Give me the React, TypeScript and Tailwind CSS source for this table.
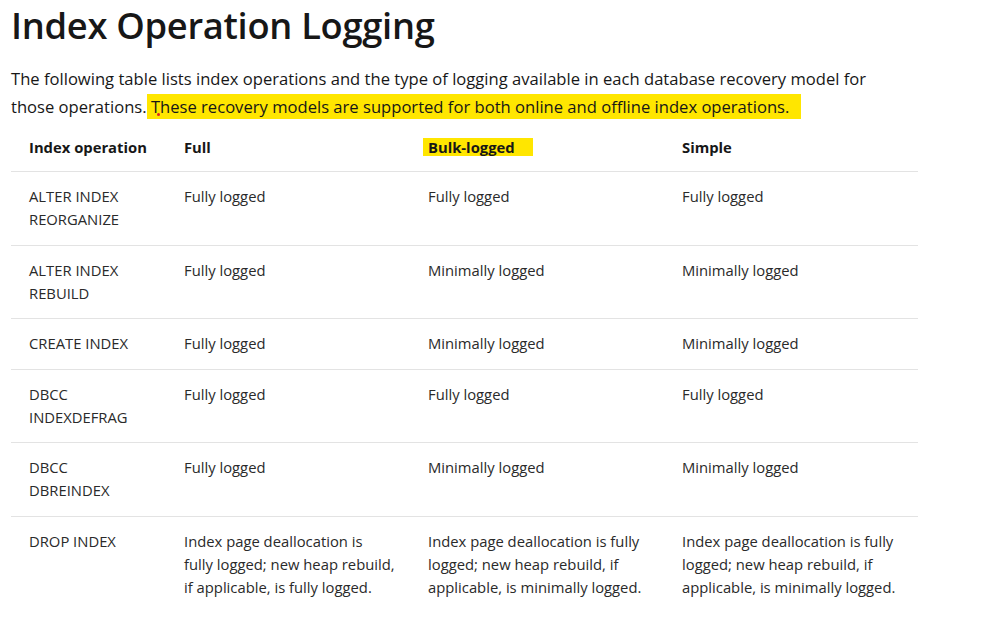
const rows: { op: string[]; full: string[]; bulk: string[]; simple: string[]; pb: string }[] = [
  { op: ["ALTER INDEX", "REORGANIZE"], full: ["Fully logged"], bulk: ["Fully logged"], simple: ["Fully logged"], pb: "pb-[14px]" },
  { op: ["ALTER INDEX", "REBUILD"], full: ["Fully logged"], bulk: ["Minimally logged"], simple: ["Minimally logged"], pb: "pb-[13px]" },
  { op: ["CREATE INDEX"], full: ["Fully logged"], bulk: ["Minimally logged"], simple: ["Minimally logged"], pb: "pb-[14px]" },
  { op: ["DBCC", "INDEXDEFRAG"], full: ["Fully logged"], bulk: ["Fully logged"], simple: ["Fully logged"], pb: "pb-[13px]" },
  { op: ["DBCC", "DBREINDEX"], full: ["Fully logged"], bulk: ["Minimally logged"], simple: ["Minimally logged"], pb: "pb-[14px]" },
  {
    op: ["DROP INDEX"],
    full: ["Index page deallocation is", "fully logged; new heap rebuild,", "if applicable, is fully logged."],
    bulk: ["Index page deallocation is fully", "logged; new heap rebuild, if", "applicable, is minimally logged."],
    simple: ["Index page deallocation is fully", "logged; new heap rebuild, if", "applicable, is minimally logged."],
    pb: "pb-[14px]",
  },
];

function Lines({ lines }: { lines: string[] }) {
  return (
    <>
      {lines.map((l, i) => (
        <span key={i} className="block whitespace-nowrap">
          {l}
        </span>
      ))}
    </>
  );
}

export default function App() {
  return (
    <div
      className="min-h-screen bg-white px-[11px] pt-[1px] text-[#171717]"
      style={{ fontFamily: '"Open Sans", "Noto Sans", sans-serif' }}
    >
      <h1 className="text-[36.3px] font-semibold leading-[48px] tracking-[-0.3px]">Index Operation Logging</h1>

      {/* intro paragraph */}
      <p className="mt-[16px] max-w-[885px] text-[16.6px] leading-[28px]">
        The following table lists index operations and the type of logging available in each database recovery model for
        those operations.{" "}
        <span className="relative bg-[#ffe600] pr-[12px] pt-[1px] pb-[1px] shadow-[-4px_0_0_#ffe600]">
          These recovery models are supported for both online and offline index operations.
          <span className="absolute left-[6px] top-[19px] h-[3px] w-[3px] rounded-full bg-[#e02020]" />
        </span>
      </p>

      <table className="w-[907px] table-fixed border-collapse text-[14.8px] leading-[23px]">
        <colgroup>
          <col className="w-[155px]" />
          <col className="w-[244px]" />
          <col className="w-[254px]" />
          <col className="w-[254px]" />
        </colgroup>
        <thead>
          <tr className="border-b border-[#e3e3e3] text-left font-bold text-[#171717]">
            <th className="px-[18px] pt-[15px] pb-[12px] font-bold">Index operation</th>
            <th className="px-[18px] pt-[15px] pb-[12px] font-bold">Full</th>
            <th className="pl-[13px] pr-[18px] pt-[15px] pb-[12px] font-bold">
              <span className="inline-block bg-[#ffe600] pl-[5px] pr-[18px] leading-[18px]">Bulk-logged</span>
            </th>
            <th className="px-[18px] pt-[15px] pb-[12px] font-bold">Simple</th>
          </tr>
        </thead>
        <tbody className="text-[#2a2a2a]">
          {rows.map((r, i) => (
            <tr key={i} className={i < rows.length - 1 ? "border-b border-[#e3e3e3]" : ""}>
              <td className={`px-[18px] pt-[13px] ${r.pb} align-top`}>
                <Lines lines={r.op} />
              </td>
              <td className={`px-[18px] pt-[13px] ${r.pb} align-top`}>
                <Lines lines={r.full} />
              </td>
              <td className={`px-[18px] pt-[13px] ${r.pb} align-top`}>
                <Lines lines={r.bulk} />
              </td>
              <td className={`px-[18px] pt-[13px] ${r.pb} align-top`}>
                <Lines lines={r.simple} />
              </td>
            </tr>
          ))}
        </tbody>
      </table>
    </div>
  );
}
